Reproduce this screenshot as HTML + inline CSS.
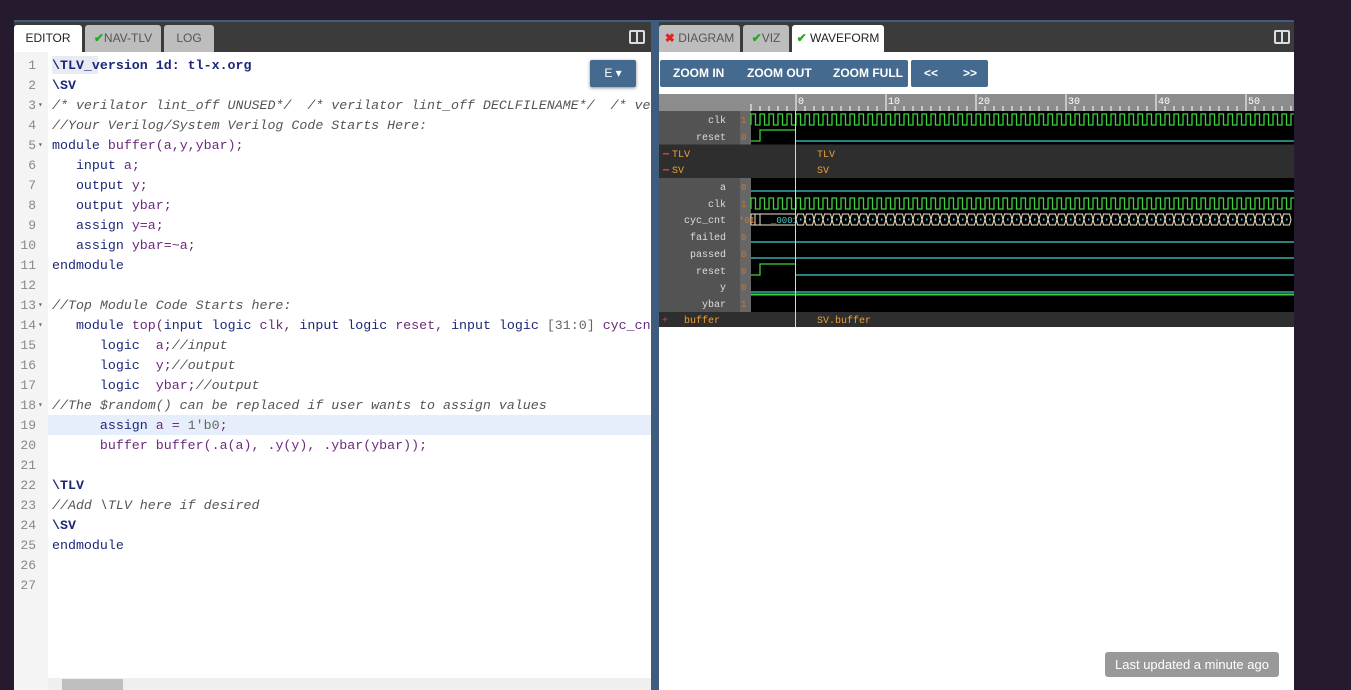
<!DOCTYPE html>
<html><head><meta charset="utf-8"><style>
*{margin:0;padding:0;box-sizing:border-box}
body{width:1351px;height:690px;background:#251a2e;position:relative;overflow:hidden;font-family:"Liberation Sans",sans-serif}
.abs{position:absolute}
.tabbar{background:#3b3b3b}
.tab{position:absolute;top:3px;height:27px;background:#bdbdbd;color:#555;font-size:12px;line-height:27px;text-align:center;border-radius:3px 3px 0 0}
.tab.act{background:#fff;color:#222;top:3px}
.ck{color:#2a2;font-weight:bold}
.code{font-family:"Liberation Mono",monospace;font-size:13.3px;white-space:pre}
.ln{position:absolute;left:0;width:36px;text-align:right;color:#888;font-family:"Liberation Mono",monospace;font-size:13px}
.cl{position:absolute;left:52px;height:20px;line-height:20px}
.k{color:#1c2877}.p{color:#6b2a7a}.c{color:#555;font-style:italic}.b{color:#1c2877;font-weight:bold}.n{color:#666}
.btn{position:absolute;top:60px;height:27px;background:#456a90;color:#fff;font-size:12px;font-weight:bold;line-height:27px;border-radius:2px}
</style></head><body>
<div class="abs" style="left:14px;top:20px;width:1280px;height:2px;background:#3e5c7c"></div>
<div class="abs tabbar" style="left:14px;top:22px;width:637px;height:30px">
 <div class="tab act" style="left:0;width:68px">EDITOR</div>
 <div class="tab" style="left:71px;width:76px"><span class="ck">✔</span>NAV-TLV</div>
 <div class="tab" style="left:150px;width:50px">LOG</div>
 <div class="abs" style="right:6px;top:8px;width:16px;height:14px;border:2px solid #ddd;border-radius:2px"><div style="position:absolute;left:5px;top:0;width:2px;height:10px;background:#ddd"></div></div>
</div>
<div class="abs" style="left:14px;top:52px;width:637px;height:638px;background:#fff"></div>
<div class="abs" style="left:14px;top:52px;width:34px;height:638px;background:#f4f4f4"></div>
<div class="abs" style="left:48px;top:415px;width:603px;height:20px;background:#e6eefb"></div>
<div class="abs" style="left:52px;top:56px;width:46px;height:18px;background:#e8ecf2"></div>
<div class="abs" style="left:590px;top:60px;width:46px;height:27px;background:#456a90;color:#fff;font-size:12px;line-height:27px;text-align:center;border-radius:2px;box-shadow:0 1px 3px #888">E ▾</div>
<div class="abs code" style="left:0;top:56px;width:651px;height:560px;overflow:hidden">
<div class="ln" style="top:0;line-height:20px">1<br>2<br>3<br>4<br>5<br>6<br>7<br>8<br>9<br>10<br>11<br>12<br>13<br>14<br>15<br>16<br>17<br>18<br>19<br>20<br>21<br>22<br>23<br>24<br>25<br>26<br>27</div>
<div class="abs n" style="left:38px;top:0;font-size:8px;line-height:20px"><br><br>▾<br><br>▾<br><br><br><br><br><br><br><br>▾<br>▾<br><br><br><br>▾</div>
<div class="cl b" style="top:0">\TLV_version 1d: tl-x.org</div>
<div class="cl b" style="top:20px">\SV</div>
<div class="cl c" style="top:40px">/* verilator lint_off UNUSED*/  /* verilator lint_off DECLFILENAME*/  /* ve</div>
<div class="cl c" style="top:60px">//Your Verilog/System Verilog Code Starts Here:</div>
<div class="cl" style="top:80px"><span class="k">module</span> <span class="p">buffer(a,y,ybar);</span></div>
<div class="cl" style="top:100px">   <span class="k">input</span> <span class="p">a;</span></div>
<div class="cl" style="top:120px">   <span class="k">output</span> <span class="p">y;</span></div>
<div class="cl" style="top:140px">   <span class="k">output</span> <span class="p">ybar;</span></div>
<div class="cl" style="top:160px">   <span class="k">assign</span> <span class="p">y=a;</span></div>
<div class="cl" style="top:180px">   <span class="k">assign</span> <span class="p">ybar=~a;</span></div>
<div class="cl k" style="top:200px">endmodule</div>
<div class="cl c" style="top:240px">//Top Module Code Starts here:</div>
<div class="cl" style="top:260px">   <span class="k">module</span> <span class="p">top(</span><span class="k">input logic</span> <span class="p">clk,</span> <span class="k">input logic</span> <span class="p">reset,</span> <span class="k">input logic</span> <span class="n">[31:0]</span> <span class="p">cyc_cnt</span></div>
<div class="cl" style="top:280px">      <span class="k">logic</span>  <span class="p">a;</span><span class="c">//input</span></div>
<div class="cl" style="top:300px">      <span class="k">logic</span>  <span class="p">y;</span><span class="c">//output</span></div>
<div class="cl" style="top:320px">      <span class="k">logic</span>  <span class="p">ybar;</span><span class="c">//output</span></div>
<div class="cl c" style="top:340px">//The $random() can be replaced if user wants to assign values</div>
<div class="cl" style="top:360px">      <span class="k">assign</span> <span class="p">a = </span><span class="n">1'b0</span><span class="p">;</span></div>
<div class="cl" style="top:380px">      <span class="p">buffer buffer(.a(a), .y(y), .ybar(ybar));</span></div>
<div class="cl b" style="top:420px">\TLV</div>
<div class="cl c" style="top:440px">//Add \TLV here if desired</div>
<div class="cl b" style="top:460px">\SV</div>
<div class="cl k" style="top:480px">endmodule</div>
</div>
<div class="abs" style="left:48px;top:678px;width:603px;height:12px;background:#efefef"></div>
<div class="abs" style="left:62px;top:679px;width:61px;height:11px;background:#bfbfbf"></div>
<div class="abs" style="left:651px;top:22px;width:8px;height:668px;background:#3e5c7c"></div>
<div class="abs tabbar" style="left:659px;top:22px;width:635px;height:30px">
 <div class="tab" style="left:0;width:81px"><span style="color:#d22;font-weight:bold">✖</span> DIAGRAM</div>
 <div class="tab" style="left:84px;width:46px"><span class="ck">✔</span>VIZ</div>
 <div class="tab act" style="left:133px;width:92px"><span class="ck">✔</span> WAVEFORM</div>
 <div class="abs" style="right:4px;top:8px;width:16px;height:14px;border:2px solid #ddd;border-radius:2px"><div style="position:absolute;left:5px;top:0;width:2px;height:10px;background:#ddd"></div></div>
</div>
<div class="abs" style="left:659px;top:52px;width:635px;height:638px;background:#fff"></div>
<div class="btn" style="left:660px;width:248px"><span style="position:absolute;left:13px">ZOOM IN</span><span style="position:absolute;left:87px">ZOOM OUT</span><span style="position:absolute;left:173px">ZOOM FULL</span></div>
<div class="btn" style="left:911px;width:77px"><span style="position:absolute;left:13px">&lt;&lt;</span><span style="position:absolute;left:52px">&gt;&gt;</span></div>
<svg class="abs" style="left:659px;top:94px" width="635" height="233" font-family="Liberation Mono, monospace" font-size="10">
<rect width="635" height="17" fill="#8c8c8c"/>
<g stroke="#fff" stroke-width="1">
<path d="M92 17V10M101 17V12M110 17V12M119 17V12M128 17V12M137 17V0M146 17V12M155 17V12M164 17V12M173 17V12M182 17V12M191 17V12M200 17V12M209 17V12M218 17V12M227 17V0M236 17V12M245 17V12M254 17V12M263 17V12M272 17V12M281 17V12M290 17V12M299 17V12M308 17V12M317 17V0M326 17V12M335 17V12M344 17V12M353 17V12M362 17V12M371 17V12M380 17V12M389 17V12M398 17V12M407 17V0M416 17V12M425 17V12M434 17V12M443 17V12M452 17V12M461 17V12M470 17V12M479 17V12M488 17V12M497 17V0M506 17V12M515 17V12M524 17V12M533 17V12M542 17V12M551 17V12M560 17V12M569 17V12M578 17V12M587 17V0M596 17V12M605 17V12M614 17V12M623 17V12M632 17V12"/>
</g>
<g fill="#fff" font-size="10"><text x="139" y="10">0</text><text x="229" y="10">10</text><text x="319" y="10">20</text><text x="409" y="10">30</text><text x="499" y="10">40</text><text x="589" y="10">50</text></g>
<rect y="17" width="635" height="216" fill="#000"/>
<rect y="17" width="81" height="33.5" fill="#535353"/><rect x="81" y="17" width="11" height="33.5" fill="#666"/>
<rect y="50.5" width="635" height="33.5" fill="#2e2e2e"/>
<rect y="84" width="81" height="134" fill="#535353"/><rect x="81" y="84" width="11" height="134" fill="#666"/>
<rect y="218" width="635" height="15" fill="#2e2e2e"/>
<g fill="#ddd" text-anchor="end"><text x="67" y="29">clk</text><text x="67" y="46">reset</text><text x="67" y="96">a</text><text x="67" y="113">clk</text><text x="67" y="129">cyc_cnt</text><text x="67" y="146">failed</text><text x="67" y="163">passed</text><text x="67" y="180">reset</text><text x="67" y="196">y</text><text x="67" y="213">ybar</text></g>
<g fill="#c87a3a" font-size="9"><text x="82" y="29">1</text><text x="82" y="46">0</text><text x="82" y="96">0</text><text x="82" y="113">1</text><text x="80" y="129">*01</text><text x="82" y="146">0</text><text x="82" y="163">0</text><text x="82" y="180">0</text><text x="82" y="196">0</text><text x="82" y="213">1</text></g>
<g fill="#f0a030"><text x="13" y="63">TLV</text><text x="13" y="79">SV</text><text x="158" y="63">TLV</text><text x="158" y="79">SV</text><text x="25" y="229">buffer</text><text x="158" y="229">SV.buffer</text></g>
<g fill="#e33"><rect x="4" y="59" width="6" height="1.5"/><rect x="4" y="75" width="6" height="1.5"/><text x="3" y="229">+</text></g>
<path id="c1" fill="none" stroke="#3ecf3e" stroke-width="1.3" d="M92 31v-11h4.5v11h4.5v-11h4.5v11h4.5v-11h4.5v11h4.5v-11h4.5v11h4.5v-11h4.5v11h4.5v-11h4.5v11h4.5v-11h4.5v11h4.5v-11h4.5v11h4.5v-11h4.5v11h4.5v-11h4.5v11h4.5v-11h4.5v11h4.5v-11h4.5v11h4.5v-11h4.5v11h4.5v-11h4.5v11h4.5v-11h4.5v11h4.5v-11h4.5v11h4.5v-11h4.5v11h4.5v-11h4.5v11h4.5v-11h4.5v11h4.5v-11h4.5v11h4.5v-11h4.5v11h4.5v-11h4.5v11h4.5v-11h4.5v11h4.5v-11h4.5v11h4.5v-11h4.5v11h4.5v-11h4.5v11h4.5v-11h4.5v11h4.5v-11h4.5v11h4.5v-11h4.5v11h4.5v-11h4.5v11h4.5v-11h4.5v11h4.5v-11h4.5v11h4.5v-11h4.5v11h4.5v-11h4.5v11h4.5v-11h4.5v11h4.5v-11h4.5v11h4.5v-11h4.5v11h4.5v-11h4.5v11h4.5v-11h4.5v11h4.5v-11h4.5v11h4.5v-11h4.5v11h4.5v-11h4.5v11h4.5v-11h4.5v11h4.5v-11h4.5v11h4.5v-11h4.5v11h4.5v-11h4.5v11h4.5v-11h4.5v11h4.5v-11h4.5v11h4.5v-11h4.5v11h4.5v-11h4.5v11h4.5v-11h4.5v11h4.5v-11h4.5v11h4.5v-11h4.5v11h4.5v-11h4.5v11h4.5v-11h4.5v11h4.5v-11h4.5v11h4.5v-11h4.5v11h4.5v-11h4.5v11h4.5v-11h4.5v11h4.5v-11h4.5v11h4.5v-11h4.5v11h4.5v-11h4.5v11h4.5v-11h4.5v11h4.5v-11h4.5v11h4.5v-11h4.5v11h4.5v-11h4.5v11h4.5"/>
<use href="#c1" y="84"/>
<path d="M92 47H101V36H137" fill="none" stroke="#3ecf3e" stroke-width="1.3"/>
<path d="M137 47H635" stroke="#4cc" stroke-width="1.3"/>
<path d="M92 181H101V170H137" fill="none" stroke="#3ecf3e" stroke-width="1.3"/>
<path d="M137 181H635" stroke="#4cc" stroke-width="1.3"/>
<path d="M92 97H635M92 148H635M92 164H635M92 198H635" stroke="#4cc" stroke-width="1.3"/>
<path d="M92 200.5H635" stroke="#3ecf3e" stroke-width="2"/>
<path fill="none" stroke="#f0e6c8" stroke-width="1" d="M137 125.5l1.5-5.5h6l1.5 5.5l-1.5 5.5h-6zm9 0l1.5-5.5h6l1.5 5.5l-1.5 5.5h-6zm9 0l1.5-5.5h6l1.5 5.5l-1.5 5.5h-6zm9 0l1.5-5.5h6l1.5 5.5l-1.5 5.5h-6zm9 0l1.5-5.5h6l1.5 5.5l-1.5 5.5h-6zm9 0l1.5-5.5h6l1.5 5.5l-1.5 5.5h-6zm9 0l1.5-5.5h6l1.5 5.5l-1.5 5.5h-6zm9 0l1.5-5.5h6l1.5 5.5l-1.5 5.5h-6zm9 0l1.5-5.5h6l1.5 5.5l-1.5 5.5h-6zm9 0l1.5-5.5h6l1.5 5.5l-1.5 5.5h-6zm9 0l1.5-5.5h6l1.5 5.5l-1.5 5.5h-6zm9 0l1.5-5.5h6l1.5 5.5l-1.5 5.5h-6zm9 0l1.5-5.5h6l1.5 5.5l-1.5 5.5h-6zm9 0l1.5-5.5h6l1.5 5.5l-1.5 5.5h-6zm9 0l1.5-5.5h6l1.5 5.5l-1.5 5.5h-6zm9 0l1.5-5.5h6l1.5 5.5l-1.5 5.5h-6zm9 0l1.5-5.5h6l1.5 5.5l-1.5 5.5h-6zm9 0l1.5-5.5h6l1.5 5.5l-1.5 5.5h-6zm9 0l1.5-5.5h6l1.5 5.5l-1.5 5.5h-6zm9 0l1.5-5.5h6l1.5 5.5l-1.5 5.5h-6zm9 0l1.5-5.5h6l1.5 5.5l-1.5 5.5h-6zm9 0l1.5-5.5h6l1.5 5.5l-1.5 5.5h-6zm9 0l1.5-5.5h6l1.5 5.5l-1.5 5.5h-6zm9 0l1.5-5.5h6l1.5 5.5l-1.5 5.5h-6zm9 0l1.5-5.5h6l1.5 5.5l-1.5 5.5h-6zm9 0l1.5-5.5h6l1.5 5.5l-1.5 5.5h-6zm9 0l1.5-5.5h6l1.5 5.5l-1.5 5.5h-6zm9 0l1.5-5.5h6l1.5 5.5l-1.5 5.5h-6zm9 0l1.5-5.5h6l1.5 5.5l-1.5 5.5h-6zm9 0l1.5-5.5h6l1.5 5.5l-1.5 5.5h-6zm9 0l1.5-5.5h6l1.5 5.5l-1.5 5.5h-6zm9 0l1.5-5.5h6l1.5 5.5l-1.5 5.5h-6zm9 0l1.5-5.5h6l1.5 5.5l-1.5 5.5h-6zm9 0l1.5-5.5h6l1.5 5.5l-1.5 5.5h-6zm9 0l1.5-5.5h6l1.5 5.5l-1.5 5.5h-6zm9 0l1.5-5.5h6l1.5 5.5l-1.5 5.5h-6zm9 0l1.5-5.5h6l1.5 5.5l-1.5 5.5h-6zm9 0l1.5-5.5h6l1.5 5.5l-1.5 5.5h-6zm9 0l1.5-5.5h6l1.5 5.5l-1.5 5.5h-6zm9 0l1.5-5.5h6l1.5 5.5l-1.5 5.5h-6zm9 0l1.5-5.5h6l1.5 5.5l-1.5 5.5h-6zm9 0l1.5-5.5h6l1.5 5.5l-1.5 5.5h-6zm9 0l1.5-5.5h6l1.5 5.5l-1.5 5.5h-6zm9 0l1.5-5.5h6l1.5 5.5l-1.5 5.5h-6zm9 0l1.5-5.5h6l1.5 5.5l-1.5 5.5h-6zm9 0l1.5-5.5h6l1.5 5.5l-1.5 5.5h-6zm9 0l1.5-5.5h6l1.5 5.5l-1.5 5.5h-6zm9 0l1.5-5.5h6l1.5 5.5l-1.5 5.5h-6zm9 0l1.5-5.5h6l1.5 5.5l-1.5 5.5h-6zm9 0l1.5-5.5h6l1.5 5.5l-1.5 5.5h-6zm9 0l1.5-5.5h6l1.5 5.5l-1.5 5.5h-6zm9 0l1.5-5.5h6l1.5 5.5l-1.5 5.5h-6zm9 0l1.5-5.5h6l1.5 5.5l-1.5 5.5h-6zm9 0l1.5-5.5h6l1.5 5.5l-1.5 5.5h-6zm9 0l1.5-5.5h6l1.5 5.5l-1.5 5.5h-6zm9 0"/>
<path stroke="#4cc" stroke-width="2" stroke-dasharray="1.5 7.5" d="M141 125.5H635"/>
<path d="M92 120H136M92 131H136M92 120V131M96 120V131M101 120V131" fill="none" stroke="#f0e6c8"/>
<text x="112" y="129" fill="#4cc" font-size="9">_0001</text>
<path d="M136.5 17V233" stroke="#f0d890" stroke-width="1"/>
</svg>
<div class="abs" style="left:1105px;top:652px;width:174px;height:25px;background:#999;color:#fff;font-size:13px;line-height:25px;text-align:center;border-radius:3px">Last updated a minute ago</div>
</body></html>
